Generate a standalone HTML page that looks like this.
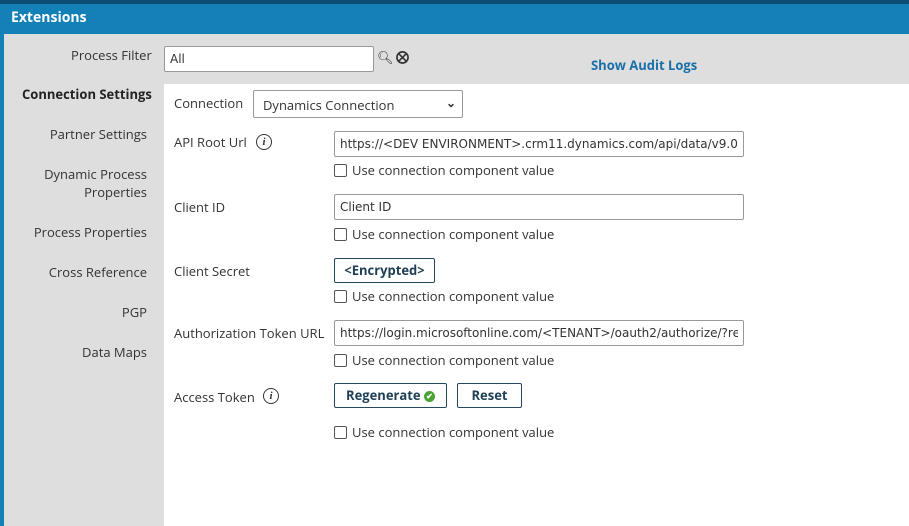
<!DOCTYPE html>
<html><head><style>
*{box-sizing:border-box}
body{margin:0;width:909px;height:526px;overflow:hidden;background:#0d4f74;font-family:"Open Sans","Liberation Sans",sans-serif;font-size:13px;color:#333;position:relative}
.win{position:absolute;left:0;top:4px;width:909px;height:522px;background:#1380b8}
.hdr{position:absolute;left:4px;top:0px;height:28px;color:#fff;font-weight:bold;font-size:14px;line-height:28px;padding-left:7px}
.body{position:absolute;left:4px;top:31px;right:0;bottom:0;background:#dedede}
.content{position:absolute;left:164px;top:84px;right:0;bottom:0;background:#fff}
.a{position:absolute;white-space:nowrap}
.nav{position:absolute;right:762px;text-align:right;white-space:nowrap;line-height:18px}
input.t{position:absolute;height:26px;border:1px solid #999;border-radius:2px;font:13px "DejaVu Sans",sans-serif;font-size:12px;padding:0 5px;color:#333;background:#fff}
.cb{position:absolute;width:13px;height:13px;border:1px solid #555;border-radius:2px;background:#fff}
.btn{position:absolute;height:25px;border:1px solid #244a63;border-radius:2px;background:#fff;font-weight:bold;color:#1e3f55;line-height:23px;text-align:center}
.info{position:absolute;width:16px;height:16px;border:1px solid #333;border-radius:50%;font:italic bold 11px "Liberation Serif",serif;text-align:center;line-height:14px}
</style></head><body>
<div class="win">
<div class="hdr">Extensions</div>
</div>
<div class="body" style="top:34px"></div>
<div class="content"></div>
<div class="a" style="left:71px;top:46px">Process Filter</div>
<input class="t" style="left:164px;top:46px;width:210px" value="All">
<div class="a" style="left:377px;top:48px;font-size:13px">&#x1F50D;&#xFE0E;</div>
<div class="a" style="left:396px;top:47px;font-weight:bold">&#x2A02;</div>
<div class="a" style="left:591px;top:56px;color:#1b6fa8;font-weight:bold">Show Audit Logs</div>
<div class="a" style="left:22px;top:85px;font-weight:bold;color:#222">Connection Settings</div>
<div class="nav" style="top:125px">Partner Settings</div>
<div class="nav" style="top:165px">Dynamic Process<br>Properties</div>
<div class="nav" style="top:223px">Process Properties</div>
<div class="nav" style="top:263px">Cross Reference</div>
<div class="nav" style="top:303px">PGP</div>
<div class="nav" style="top:343px">Data Maps</div>
<div class="a" style="left:174px;top:94px">Connection</div>
<div class="a" style="left:253px;top:90px;width:210px;height:28px;border:1px solid #999;border-radius:2px;padding:5px 9px">Dynamics Connection<span style="position:absolute;right:6px;top:3px;font-size:12px;font-weight:bold">&#x2304;</span></div>
<div class="a" style="left:174px;top:133px">API Root Url</div><div class="info" style="left:256px;top:134px">i</div>
<input class="t" style="left:334px;top:131px;width:410px" value="https://<DEV ENVIRONMENT>.crm11.dynamics.com/api/data/v9.0">
<div class="cb" style="left:334px;top:164px"></div><div class="a" style="left:352px;top:161px">Use connection component value</div>
<div class="a" style="left:174px;top:198px">Client ID</div>
<input class="t" style="left:334px;top:194px;width:410px" value="Client ID">
<div class="cb" style="left:334px;top:228px"></div><div class="a" style="left:352px;top:225px">Use connection component value</div>
<div class="a" style="left:174px;top:262px">Client Secret</div>
<div class="btn" style="left:334px;top:258px;width:101px">&lt;Encrypted&gt;</div>
<div class="cb" style="left:334px;top:290px"></div><div class="a" style="left:352px;top:287px">Use connection component value</div>
<div class="a" style="left:174px;top:324px">Authorization Token URL</div>
<input class="t" style="left:334px;top:320px;width:410px" value="https://login.microsoftonline.com/<TENANT>/oauth2/authorize/?re">
<div class="cb" style="left:334px;top:354px"></div><div class="a" style="left:352px;top:351px">Use connection component value</div>
<div class="a" style="left:174px;top:388px">Access Token</div><div class="info" style="left:263px;top:388px">i</div>
<div class="btn" style="left:334px;top:383px;width:113px">Regenerate <span style="display:inline-block;width:11px;height:11px;border-radius:50%;background:#4aa334;color:#fff;font-size:8px;line-height:11px;vertical-align:1px">&#x2714;</span></div>
<div class="btn" style="left:457px;top:383px;width:65px">Reset</div>
<div class="cb" style="left:334px;top:426px"></div><div class="a" style="left:352px;top:423px">Use connection component value</div>
</body></html>
